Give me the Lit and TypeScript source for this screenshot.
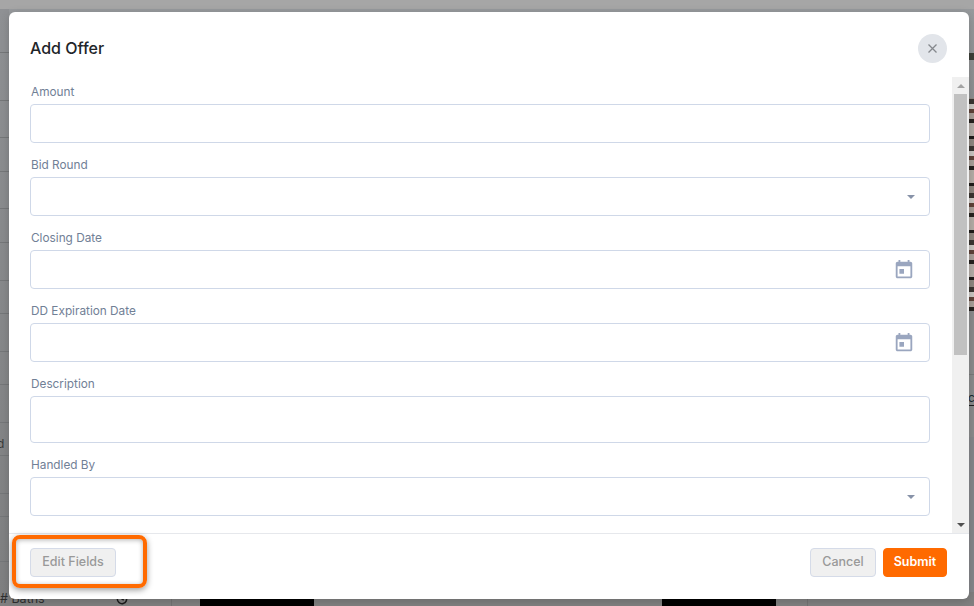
import { LitElement, html, css, svg } from "lit";
import { customElement } from "lit/decorators.js";

type Field = { label: string; kind: "text" | "select" | "date" | "area" };

const FIELDS: Field[] = [
  { label: "Amount", kind: "text" },
  { label: "Bid Round", kind: "select" },
  { label: "Closing Date", kind: "date" },
  { label: "DD Expiration Date", kind: "date" },
  { label: "Description", kind: "area" },
  { label: "Handled By", kind: "select" },
];

const LEFT_ROWS: { h: number; text?: string }[] = [
  { h: 44 }, { h: 48 }, { h: 37 }, { h: 34 }, { h: 37 }, { h: 34 }, { h: 38 }, { h: 33 },
  { h: 38 }, { h: 33 }, { h: 38 }, { h: 33, text: "d" }, { h: 38 }, { h: 23 }, { h: 45 },
];

@customElement("app-root")
export class AppRoot extends LitElement {
  static styles = css`
    :host {
      display: block;
      width: 974px;
      height: 606px;
      font-family: Inter, "Noto Sans", "Liberation Sans", sans-serif;
    }
    * { box-sizing: border-box; }
    .page {
      position: relative;
      width: 974px;
      height: 606px;
      overflow: hidden;
      background: #8a8b8c;
      display: flex;
      flex-direction: column;
    }
    .top-band { height: 9px; background: #a6a6a6; flex: none; }
    .back { flex: 1; display: flex; justify-content: space-between; min-height: 0; background: linear-gradient(180deg, #979a9d 0, #8a8b8c 120px); }
    .left { width: 9px; display: flex; flex-direction: column; background: linear-gradient(180deg, #8f9194, #7f8081); overflow: hidden; }
    .left .row { border-bottom: 1px solid #757779; flex: none; font-size: 12px; line-height: 41px; color: #3a3a3a; text-indent: -3px; overflow: hidden; }
    .right { width: 5px; display: flex; flex-direction: column; font-size: 12px; color: #2a2a2a; overflow: hidden; }
    .r-gap { flex: none; }
    .r-dark { height: 7px; background: #3d3f38; flex: none; }
    .r-photo {
      height: 213px;
      flex: none;
      background:
        repeating-linear-gradient(0deg, #26221f 0 4px, #a89f98 4px 10px, #5e4238 10px 14px, #c9c5c0 14px 19px, #3a3531 19px 24px, #8f8780 24px 31px, #1f1c1a 31px 34px, #b3aca6 34px 47px);
    }
    .r-line { border-top: 1px solid #797a7b; flex: none; }
    .r-link { height: 14px; flex: none; border-bottom: 1px solid #1c1c1c; color: #1c2a30; line-height: 12px; margin-left: -1px; }
    .r-blue { flex: 1; background: #85878b; }
    .bottom {
      position: absolute;
      left: 0;
      right: 0;
      bottom: 0;
      height: 14px;
      display: flex;
      align-items: flex-end;
      background: #808080;
    }
    .baths { width: 115px; flex: none; font-size: 12.5px; line-height: 14px; color: #2f2f2f; white-space: nowrap; }
    .hist { width: 85px; flex: none; display: flex; align-items: center; height: 14px; }
    .hist i { width: 1px; height: 14px; background: #737373; margin-left: 42px; }
    .black { width: 114px; height: 7px; background: #000; flex: none; }
    .spacer { width: 348px; height: 7px; flex: none; }
    .tail { width: 32px; height: 14px; flex: none; border-right: 1px solid #737373; }

    .modal {
      position: absolute;
      left: 9px;
      top: 12px;
      width: 960px;
      height: 587px;
      background: #fff;
      border-radius: 6px;
      box-shadow: 0 2px 10px rgba(0, 0, 0, 0.18);
      display: flex;
      flex-direction: column;
      overflow: hidden;
    }
    .head {
      height: 65px;
      flex: none;
      padding: 22px 22px 14px 21px;
      display: flex;
      align-items: center;
      justify-content: space-between;
    }
    .title { font-size: 16px; font-weight: 500; color: #212529; padding-bottom: 2px; }
    .close {
      width: 29px;
      height: 29px;
      border-radius: 50%;
      background: #e2e5ea;
      border: 0;
      padding: 0;
      display: flex;
      align-items: center;
      justify-content: center;
    }
    .mid { height: 456px; flex: none; display: flex; }
    .form {
      flex: 1;
      padding: 5px 22px 0 21px;
      display: flex;
      flex-direction: column;
      gap: 12px;
      overflow: hidden;
    }
    .field { display: flex; flex-direction: column; flex: none; }
    .label { height: 18px; padding: 1px 0 0 1px; line-height: 18px; font-size: 11.8px; color: #718096; margin-bottom: 4px; }
    .input {
      height: 39px;
      border: 1px solid #cfd8e8;
      border-radius: 4px;
      background: #fff;
      display: flex;
      align-items: center;
      justify-content: flex-end;
    }
    .input.area { height: 47px; }
    .input.select { padding-right: 14px; }
    .input.date { padding-right: 14px; }
    .caret { width: 0; height: 0; border-left: 4.5px solid transparent; border-right: 4.5px solid transparent; border-top: 4px solid #8792a8; }
    .scroll {
      width: 17px;
      flex: none;
      background: #f0f0f0;
      display: flex;
      flex-direction: column;
      align-items: center;
    }
    .arrow-box { height: 17px; width: 17px; flex: none; display: flex; align-items: center; justify-content: center; }
    .up { width: 0; height: 0; border-left: 4px solid transparent; border-right: 4px solid transparent; border-bottom: 4px solid #a3a3a3; }
    .down { width: 0; height: 0; border-left: 4px solid transparent; border-right: 4px solid transparent; border-top: 4px solid #505050; }
    .thumb { width: 13px; height: 261px; background: #c1c1c1; flex: none; }
    .track { flex: 1; }
    .foot {
      position: relative;
      flex: 1;
      border-top: 1px solid #e6e8ec;
      padding: 14px 22px 0 21px;
      display: flex;
      justify-content: space-between;
      align-items: flex-start;
    }
    .actions { display: flex; gap: 7px; }
    .btn {
      height: 29px;
      border-radius: 4px;
      border: 1px solid #d5dbe8;
      background: #f0f0f0;
      color: #999;
      font: 500 12.5px Inter, "Noto Sans", "Liberation Sans", sans-serif;
      padding: 0 0 2px;
    }
    .edit { width: 86px; }
    .cancel { width: 66px; }
    .submit { width: 64px; background: #ff6a00; border-color: #ff6a00; color: #fff; font-weight: 600; }
    .mark {
      position: absolute;
      left: 3px;
      top: 1px;
      width: 135px;
      height: 53px;
      border: 4.5px solid #ff6a00;
      border-radius: 8px;
      box-shadow: 0 2px 6px rgba(0, 0, 0, 0.4), inset 0 1px 5px rgba(0, 0, 0, 0.3);
      pointer-events: none;
    }
  `;

  private calendar() {
    return html`<svg width="22" height="22" viewBox="0 0 24 24" fill="#9aa6bf">
      ${svg`<path d="M7 11h5v5H7zM16 1v2H8V1H6v2H5c-1.11 0-1.99.9-1.99 2L3 19c0 1.1.89 2 2 2h14c1.1 0 2-.9 2-2V5c0-1.1-.9-2-2-2h-1V1h-2zm3 18H5V8h14v11z"/>`}
    </svg>`;
  }

  private field(f: Field) {
    return html`<div class="field">
      <div class="label">${f.label}</div>
      <div class="input ${f.kind}">
        ${f.kind === "select" ? html`<span class="caret"></span>` : ""}
        ${f.kind === "date" ? this.calendar() : ""}
      </div>
    </div>`;
  }

  render() {
    return html`<div class="page">
      <div class="top-band"></div>
      <div class="back">
        <div class="left">
          ${LEFT_ROWS.map((r) => html`<div class="row" style="height:${r.h}px">${r.text ?? ""}</div>`)}
        </div>
        <div class="right">
          <div class="r-gap" style="height:44px"></div>
          <div class="r-dark"></div>
          <div class="r-gap" style="height:38px"></div>
          <div class="r-photo"></div>
          <div class="r-gap" style="height:63px"></div>
          <div class="r-line" style="height:18px"></div>
          <div class="r-link">c</div>
          <div class="r-gap" style="height:31px"></div>
          <div class="r-blue"></div>
        </div>
      </div>
      <div class="bottom">
        <div class="baths"># Baths</div>
        <div class="hist">
          <svg width="14" height="14" viewBox="0 0 24 24" fill="none" stroke="#1c1c1c" stroke-width="2.6">
            <path d="M4 12a8 8 0 1 0 2.5-5.8L4 8.5M4 4v4.5h4.5M12 7.5V12l3 2" />
          </svg>
          <i></i>
        </div>
        <div class="black"></div>
        <div class="spacer"></div>
        <div class="black"></div>
        <div class="tail"></div>
      </div>
      <div class="modal">
        <div class="head">
          <div class="title">Add Offer</div>
          <button class="close" aria-label="Close">
            <svg width="11" height="11" viewBox="0 0 11 11" fill="none" stroke="#85888d" stroke-width="1.3">
              <path d="M1.5 1.5l8 8M9.5 1.5l-8 8" />
            </svg>
          </button>
        </div>
        <div class="mid">
          <div class="form">${FIELDS.map((f) => this.field(f))}</div>
          <div class="scroll">
            <div class="arrow-box"><span class="up"></span></div>
            <div class="thumb"></div>
            <div class="track"></div>
            <div class="arrow-box"><span class="down"></span></div>
          </div>
        </div>
        <div class="foot">
          <button class="btn edit">Edit Fields</button>
          <div class="actions">
            <button class="btn cancel">Cancel</button>
            <button class="btn submit">Submit</button>
          </div>
          <div class="mark"></div>
        </div>
      </div>
    </div>`;
  }
}
